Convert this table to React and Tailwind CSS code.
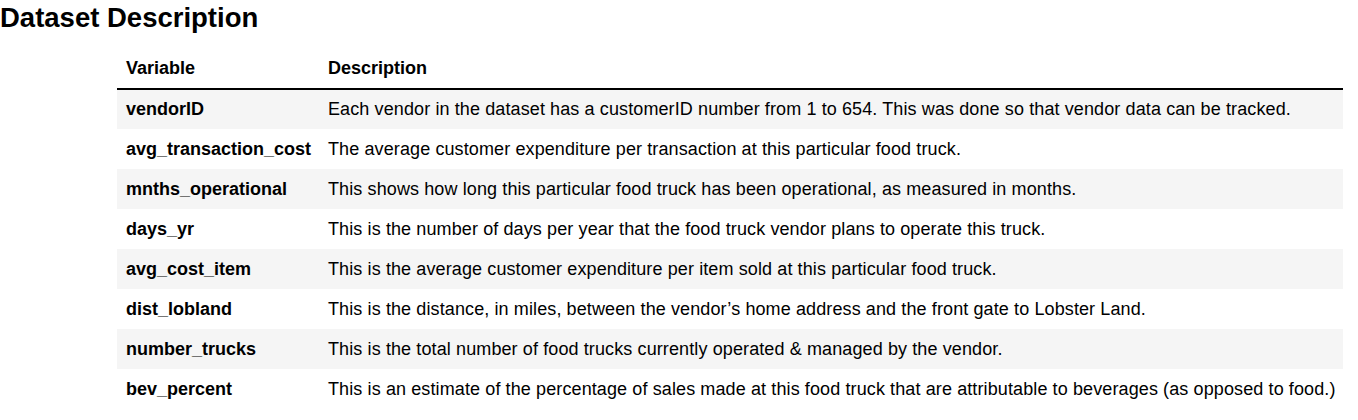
const ROWS = [
  ['vendorID', 'Each vendor in the dataset has a customerID number from 1 to 654. This was done so that vendor data can be tracked.'],
  ['avg_transaction_cost', 'The average customer expenditure per transaction at this particular food truck.'],
  ['mnths_operational', 'This shows how long this particular food truck has been operational, as measured in months.'],
  ['days_yr', 'This is the number of days per year that the food truck vendor plans to operate this truck.'],
  ['avg_cost_item', 'This is the average customer expenditure per item sold at this particular food truck.'],
  ['dist_lobland', 'This is the distance, in miles, between the vendor\u2019s home address and the front gate to Lobster Land.'],
  ['number_trucks', 'This is the total number of food trucks currently operated & managed by the vendor.'],
  ['bev_percent', 'This is an estimate of the percentage of sales made at this food truck that are attributable to beverages (as opposed to food.)'],
];

export default function App() {
  return (
    <div className="w-[1358px] h-[420px] overflow-hidden bg-white text-black" style={{ fontFamily: '"Liberation Sans", Arial, sans-serif' }}>
      <h1 className="text-[27.5px] font-bold leading-[34px] pt-[1px]">Dataset Description</h1>

      <table className="ml-[117px] mt-[14px] w-[1226px] border-collapse text-[18px]">
        <thead>
          <tr className="border-b-2 border-black">
            <th className="h-[40px] w-[202px] pl-[9px] text-left font-bold">Variable</th>
            <th className="h-[40px] pl-[9px] text-left font-bold">Description</th>
          </tr>
        </thead>
        <tbody>
          {ROWS.map(([name, desc], i) => (
            <tr key={name} className={i % 2 === 0 ? 'bg-[#f5f5f5]' : 'bg-white'}>
              <td className="h-[40px] pl-[9px] font-bold whitespace-nowrap">{name}</td>
              <td className="h-[40px] pl-[9px] whitespace-nowrap tracking-[0.11px]">{desc}</td>
            </tr>
          ))}
        </tbody>
      </table>
    </div>
  );
}
